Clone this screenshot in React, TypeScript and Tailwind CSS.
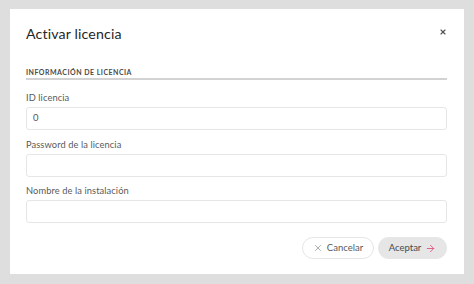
import { X, ArrowRight } from "lucide-react";

const font = { fontFamily: "Lato, 'Noto Sans', sans-serif" };

function Field({ label, value, top }: { label: string; value?: string; top: string }) {
  return (
    <div className={top}>
      <div className="text-[9.3px] leading-[12px] tracking-[0.01em] text-[#5a5a5a]">{label}</div>
      <div className="mt-[3px] flex h-[23px] items-center rounded-[3px] border border-[#e6e6e6] bg-white px-[6px] text-[9.5px] text-[#555]">
        {value}
      </div>
    </div>
  );
}

export default function App() {
  return (
    <div className="h-[284px] w-[474px] bg-[#dedede] pt-[9px] pl-[10px]" style={font}>
      <div className="flex h-[265px] w-[454px] flex-col bg-white pt-[15px] pr-[17px] pb-[15px] pl-[16px]">
        <div className="flex h-5 items-start justify-between">
          <h1 className="text-[14.2px] leading-5 tracking-[0.01em] text-[#262626]">Activar licencia</h1>
          <X className="mt-[4px] h-[8px] w-[8px] text-[#555]" strokeWidth={3.5} />
        </div>

        <div className="mt-[23px] border-b-2 border-[#d2d2d2] pb-[1px] text-[7px] leading-[10px] font-bold tracking-[0.07em] text-[#4a4a4a] uppercase">
          Información de licencia
        </div>

        <Field label="ID licencia" value="0" top="mt-[12px]" />
        <Field label="Password de la licencia" top="mt-[9px]" />
        <Field label="Nombre de la instalación" top="mt-[8px]" />

        <div className="mt-[14px] flex justify-end gap-[4px]">
          <button className="flex h-[22px] w-[72px] items-center justify-center gap-[4px] rounded-full border border-[#e6e6e6] bg-white text-[9.5px] text-[#5a5a5a]">
            <X className="h-[10px] w-[10px] text-[#666]" strokeWidth={1.3} />
            Cancelar
          </button>
          <button className="flex h-[22px] w-[69px] items-center justify-center gap-[4px] rounded-full bg-[#e6e6e6] text-[9.5px] text-[#4a4a4a]">
            Aceptar
            <ArrowRight className="h-[11px] w-[11px] text-[#e0557f]" strokeWidth={2} />
          </button>
        </div>
      </div>
    </div>
  );
}
